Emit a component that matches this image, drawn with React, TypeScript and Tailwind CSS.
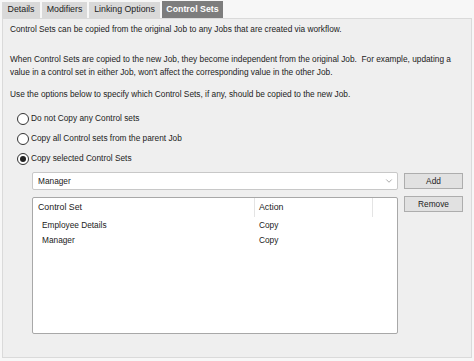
import { ChevronDown } from "lucide-react";

function Radio({ label, checked }: { label: string; checked?: boolean }) {
    return (
        <div className="flex items-center h-[13px] gap-[2px]">
            <span className="w-[12px] h-[12px] rounded-full border border-[#333] bg-white flex items-center justify-center">
                {checked && <span className="w-[6px] h-[6px] rounded-full bg-[#222]" />}
            </span>
            <span>{label}</span>
        </div>
    );
}

export default function App() {
    const tabs = [
        ["Details", "w-[38px]"],
        ["Modifiers", "w-[45px]"],
        ["Linking Options", "w-[71px]"],
    ];
    const rows = [
        ["Employee Details", "Copy"],
        ["Manager", "Copy"],
    ];

    return (
        <div
            className="w-[474px] h-[361px] bg-[#f7f7f7] text-[8.3px] text-[#222] flex flex-col overflow-hidden"
            style={{ fontFamily: "'Liberation Sans', Arial, sans-serif" }}
        >
            {/* tabs */}
            <div className="flex h-[18px] pl-[2px] pt-[2px] gap-[2px] items-end">
                {tabs.map(([t, w]) => (
                    <div key={t} className={`${w} h-[16px] bg-[#d9d9d9] flex items-center justify-center text-[8.8px]`}>
                        {t}
                    </div>
                ))}
                <div className="w-[61px] h-[17px] bg-[#7d7d7d] text-white font-bold flex items-center justify-center text-[8.8px]">
                    Control Sets
                </div>
            </div>

            {/* panel */}
            <div className="mx-[2px] mb-[3px] flex-1 bg-[#efefef] border border-[#dadada] pl-[7px] pr-[8px] flex flex-col">
                <div className="mt-[4px] leading-[13px]">
                    Control Sets can be copied from the original Job to any Jobs that are created via workflow.
                </div>
                <div className="mt-[17px] leading-[13px]">
                    When Control Sets are copied to the new Job, they become independent from the original Job.&nbsp; For example, updating a
                    <br />
                    value in a control set in either Job, won't affect the corresponding value in the other Job.
                </div>
                <div className="mt-[9px] leading-[13px]">
                    Use the options below to specify which Control Sets, if any, should be copied to the new Job.
                </div>

                <div className="mt-[11px] ml-[7px] flex flex-col gap-[7px]">
                    <Radio label="Do not Copy any Control sets" />
                    <Radio label="Copy all Control sets from the parent Job" />
                    <Radio label="Copy selected Control Sets" checked />
                </div>

                <div className="mt-[7px] ml-[22px] flex gap-[6px]">
                    <div className="flex flex-col gap-[7px] w-[369px]">
                        <div className="h-[18px] bg-white border border-[#c8c8c8] rounded-[2px] flex items-center justify-between pl-[5px] pr-[3px]">
                            <span>Manager</span>
                            <ChevronDown size={10} strokeWidth={1.2} className="text-[#555]" />
                        </div>
                        <div className="h-[137px] bg-white border border-[#a8a8a8] rounded-[2px] flex flex-col">
                            <div className="flex h-[19px] items-center">
                                <div className="w-[222px] pl-[5px] h-full flex items-center border-r border-[#e4e4e4] text-[8.8px]">
                                    Control Set
                                </div>
                                <div className="w-[118px] pl-[4px] h-full flex items-center border-r border-[#e4e4e4] text-[8.8px]">
                                    Action
                                </div>
                            </div>
                            <div className="flex flex-col mt-[2px] gap-[2px]">
                                {rows.map(([name, action]) => (
                                    <div key={name} className="flex h-[13px] items-center">
                                        <div className="w-[222px] pl-[9px]">{name}</div>
                                        <div className="pl-[4px]">{action}</div>
                                    </div>
                                ))}
                            </div>
                        </div>
                    </div>
                    <div className="flex flex-col gap-[7px] pt-[1px]">
                        <button className="w-[59px] h-[16px] bg-[#e1e1e1] border border-[#adadad] flex items-center justify-center text-[8.3px]">
                            Add
                        </button>
                        <button className="w-[59px] h-[16px] bg-[#e1e1e1] border border-[#adadad] flex items-center justify-center text-[8.3px]">
                            Remove
                        </button>
                    </div>
                </div>
            </div>
        </div>
    );
}
